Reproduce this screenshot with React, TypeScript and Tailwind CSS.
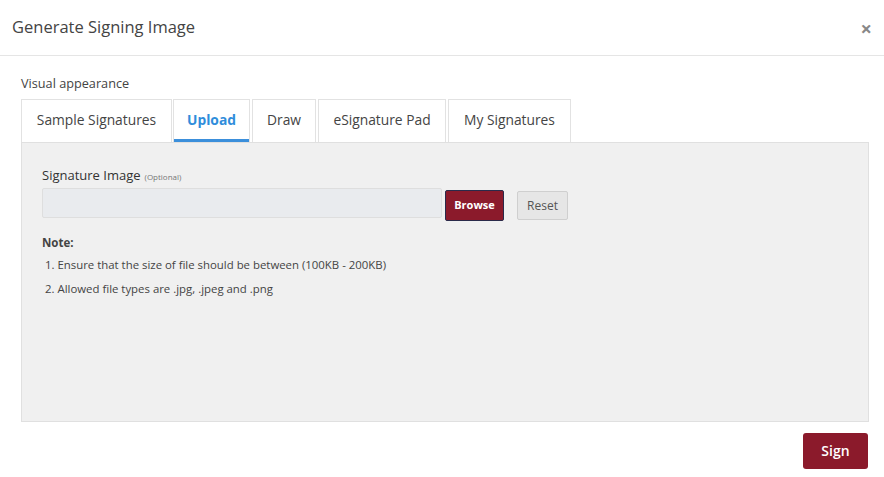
import React from "react";

export default function App() {
  const font = { fontFamily: '"Open Sans", "Noto Sans", sans-serif' };
  const tabs = [
    { t: "Sample Signatures", w: 151, ml: 0 },
    { t: "Upload", w: 77, ml: 1 },
    { t: "Draw", w: 64, ml: 2 },
    { t: "eSignature Pad", w: 128, ml: 2 },
    { t: "My Signatures", w: 123, ml: 2 },
  ];
  return (
    <div className="w-[884px] h-[477px] bg-white text-[#333] relative overflow-hidden" style={font}>
      <div className="h-[56px] border-b border-[#e5e5e5] flex items-center justify-between pl-[12px] pr-[12px]">
        <div className="text-[16.5px] text-[#444] leading-none -mt-[1px]">Generate Signing Image</div>
        <div className="text-[#888] text-[20px] font-bold leading-none mt-[2px]">×</div>
      </div>
      <div className="px-[21px] pt-[21px]">
        <div className="text-[12.7px] text-[#444] leading-none">Visual appearance</div>
        <div className="flex mt-[9px] h-[43px]">
          {tabs.map((tab, i) => (
            <div
              key={tab.t}
              className={
                "border border-[#e2e2e2] border-b-0 flex items-center justify-center text-[13.8px] relative " +
                (i === 1 ? "text-[#2f8ddb] font-bold" : "text-[#444]")
              }
              style={{ width: tab.w, marginLeft: tab.ml }}
            >
              <span className="-mt-[1px]">{tab.t}</span>
              {i === 1 && <div className="absolute left-0 right-0 bottom-0 h-[3px] bg-[#3b8fdb]" />}
            </div>
          ))}
        </div>
        <div className="w-[848px] h-[280px] bg-[#f0f0f0] border border-[#e0e0e0] px-[20px] pt-[23px]">
          <div className="flex items-baseline gap-[4px]">
            <span className="text-[13px] text-[#333]">Signature Image</span>
            <span className="text-[8px] text-[#777]">(Optional)</span>
          </div>
          <div className="flex items-start mt-[3px]">
            <div className="w-[400px] h-[30px] bg-[#e9ebee] border border-[#dedede] rounded-[2px]" />
            <button className="ml-[3px] mt-[2px] w-[59px] h-[31px] bg-[#8b1a2b] border-[1.5px] border-[#2a2a4a] rounded-[2px] text-white text-[11px] font-bold">
              Browse
            </button>
            <button className="ml-[13px] mt-[3px] w-[51px] h-[29px] bg-[#e6e6e6] border border-[#cfcfcf] rounded-[2px] text-[#555] text-[12px]">
              Reset
            </button>
          </div>
          <div className="text-[11.5px] font-bold text-[#444] mt-[16px] leading-none">Note:</div>
          <div className="text-[11.4px] text-[#444] ml-[3px] mt-[4px] leading-[24px]">
            <div>1. Ensure that the size of file should be between (100KB - 200KB)</div>
            <div>2. Allowed file types are .jpg, .jpeg and .png</div>
          </div>
        </div>
        <div className="flex justify-end mt-[11px] mr-[-5px]">
          <button className="w-[65px] h-[36px] bg-[#8b1a2b] rounded-[3px] text-white text-[14px] font-semibold">
            Sign
          </button>
        </div>
      </div>
    </div>
  );
}
